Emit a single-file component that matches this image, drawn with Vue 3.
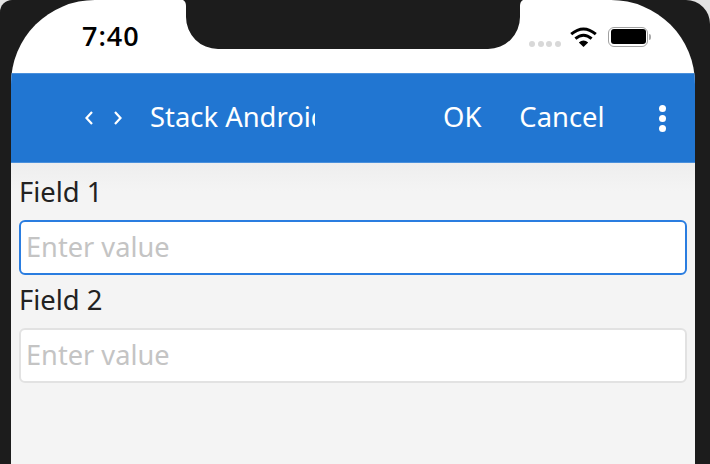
<script setup>
const fields = [
  { label: 'Field 1', focused: true },
  { label: 'Field 2', focused: false },
]
</script>

<template>
  <div class="frame">
    <div class="screen">
      <div class="statusbar">
        <span class="time">7:40</span>
        <svg class="notch" width="340" height="49" viewBox="0 0 340 49">
          <path d="M0 0 H340 C338 1 337 3 337 6 V17 A32 32 0 0 1 305 49 H35 A32 32 0 0 1 3 17 V6 C3 3 2 1 0 0 Z" fill="#1c1c1c" />
        </svg>
        <div class="status-icons">
          <div class="dots"><i></i><i></i><i></i><i></i></div>
          <svg class="wifi" width="27" height="20" viewBox="0 0 27 20">
            <path d="M13.5 20 L8.8 15.4 Q13.5 11.6 18.2 15.4 Z" fill="#000" />
            <path d="M5.4 11.6 Q13.5 4.8 21.6 11.6" fill="none" stroke="#000" stroke-width="3" />
            <path d="M1.2 7.2 Q13.5 -3.2 25.8 7.2" fill="none" stroke="#000" stroke-width="3" />
          </svg>
          <div class="battery"><div class="battery-fill"></div></div>
          <div class="battery-cap"></div>
        </div>
      </div>
      <div class="toolbar">
        <div class="nav">
          <svg width="10" height="16" viewBox="0 0 10 16"><path d="M8 2 L2.5 8 L8 14" fill="none" stroke="#fff" stroke-width="2.2" /></svg>
          <svg width="10" height="16" viewBox="0 0 10 16"><path d="M2 2 L7.5 8 L2 14" fill="none" stroke="#fff" stroke-width="2.2" /></svg>
        </div>
        <div class="title">Stack Android</div>
        <span class="action ok">OK</span>
        <span class="action cancel">Cancel</span>
        <div class="more"><i></i><i></i><i></i></div>
      </div>
      <div class="content">
        <div v-for="f in fields" :key="f.label" class="field">
          <label>{{ f.label }}</label>
          <input type="text" placeholder="Enter value" :class="{ focused: f.focused }" />
        </div>
      </div>
    </div>
  </div>
</template>

<style scoped>
.frame {
  width: 710px;
  height: 464px;
  box-sizing: border-box;
  padding: 0 15px 0 11px;
  background: #1c1c1c;
  border-radius: 12px 24px 0 0;
  font-family: "Noto Sans", sans-serif;
  overflow: hidden;
}
.screen {
  height: 464px;
  background: #fff;
  border-radius: 84px 84px 0 0;
  overflow: hidden;
  display: flex;
  flex-direction: column;
  position: relative;
}
.statusbar {
  height: 73px;
  flex: none;
  display: flex;
  align-items: flex-start;
  justify-content: space-between;
  padding: 0 44px 0 71px;
}
.time {
  margin-top: 19px;
  font-size: 27px;
  line-height: 34px;
  font-weight: 600;
  letter-spacing: 1px;
  color: #000;
  font-family: "Open Sans", sans-serif;
}
.notch {
  position: absolute;
  left: 172px;
  top: 0;
}
.status-icons {
  display: flex;
  align-items: center;
  margin-top: 26px;
}
.dots {
  display: flex;
  gap: 2.6px;
  margin-top: 15px;
  margin-right: 9px;
}
.dots i {
  width: 6px;
  height: 6px;
  border-radius: 50%;
  background: #d8d8d8;
}
.wifi {
  margin-right: 11px;
}
.battery {
  width: 40px;
  height: 20px;
  box-sizing: border-box;
  border: 1.5px solid #a0a0a0;
  border-radius: 6px;
  padding: 1.5px;
}
.battery-fill {
  height: 100%;
  background: #000;
  border-radius: 3px;
}
.battery-cap {
  width: 2px;
  height: 6px;
  margin-left: 1px;
  background: #aaa;
  border-radius: 0 2px 2px 0;
}
.toolbar {
  height: 90px;
  flex: none;
  display: flex;
  align-items: center;
  background: #2176d2;
  color: #fff;
  font-size: 27.4px;
  box-shadow: inset 0 1px 0 #4a90dc, inset 0 -1px 0 #4a90dc;
  position: relative;
  z-index: 1;
}
.nav {
  display: flex;
  gap: 19px;
  margin-left: 73px;
  width: 66px;
}
.title {
  width: 165px;
  margin-bottom: 4px;
  overflow: hidden;
  white-space: nowrap;
}
.action {
  margin-bottom: 4px;
}
.ok {
  margin-left: 128px;
}
.cancel {
  margin-left: 38px;
}
.more {
  margin-left: 54px;
  display: flex;
  flex-direction: column;
  gap: 3px;
}
.more i {
  width: 7px;
  height: 7px;
  border-radius: 50%;
  background: #fff;
}
.content {
  flex: 1;
  padding: 8px 8px 0;
  background: linear-gradient(#eeeeee, #f4f4f4 28px);
}
.field {
  display: flex;
  flex-direction: column;
}
label {
  font-size: 27.4px;
  line-height: 41px;
  margin-bottom: 8px;
  color: #222;
}
input {
  height: 55px;
  box-sizing: border-box;
  margin-bottom: 4px;
  padding: 0 5px 2px;
  font-family: inherit;
  font-size: 27.2px;
  border: 2px solid #e2e2e2;
  border-radius: 6px;
  background: #fff;
  outline: none;
}
input.focused {
  border-color: #2a7de0;
}
input::placeholder {
  color: #c4c4c4;
  opacity: 1;
}
</style>

<style>
body {
  margin: 0;
  background: #e4e4e4;
}
</style>
